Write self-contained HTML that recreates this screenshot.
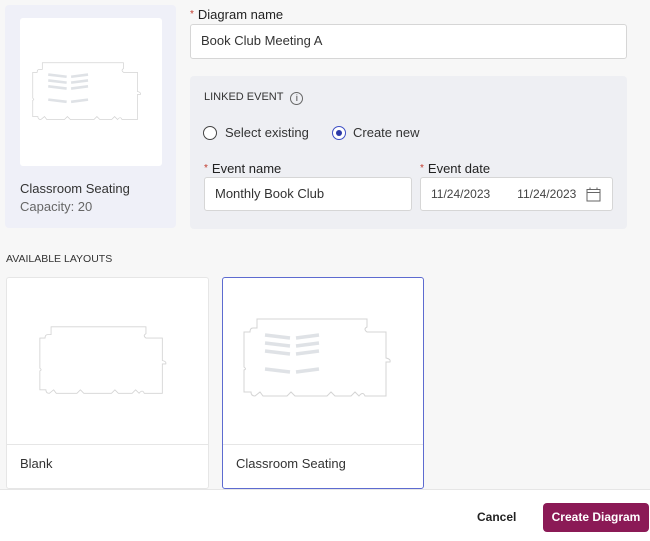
<!DOCTYPE html>
<html><head><meta charset="utf-8"><style>
*{box-sizing:border-box;margin:0;padding:0}
body{width:650px;height:541px;background:#f7f7f7;font-family:"Liberation Sans",sans-serif;color:#222;position:relative;overflow:hidden;font-size:13px}
.a{position:absolute}
.inp{position:absolute;background:#fff;border:1px solid #d6d6d6;border-radius:3px;padding-left:10px;line-height:32px;font-size:13px;color:#333}
.lab{position:absolute;font-size:13px;color:#222}
.lab b{color:#c0392b;font-weight:normal;font-size:10px;margin-right:4px;position:relative;top:-2px}
.card{position:absolute;background:#fff;border-radius:3px;border:1px solid #e6e6e6}
</style></head><body>
<svg width="0" height="0" style="position:absolute"><defs>
<g id="plan" fill="none" stroke="#d4d4d4" stroke-width="1">
<path d="M14,1 H124 V9 q-4,2 0,5 H134 V14 H143 V40 q5,1 4,4 H143 V78 H122 q-2,-5 -6,0 L112,74 L108,78 H92 L88,74 L84,78 H52 L48,74 L44,78 H20 L17,74 L12,78 q-4,0 -4,-4 H1 V52 q3,-1 0,-3 V14 H7 q0,-4 3,-4 H14 Z"/>
</g>
<g id="seats" stroke="#dfe2e6" stroke-width="3.5">
<line x1="22" y1="17" x2="47" y2="20"/><line x1="53" y1="20" x2="76" y2="17"/>
<line x1="22" y1="25" x2="47" y2="28"/><line x1="53" y1="28" x2="76" y2="25"/>
<line x1="22" y1="33" x2="47" y2="36"/><line x1="53" y1="36" x2="76" y2="33"/>
<line x1="22" y1="51" x2="47" y2="54"/><line x1="53" y1="54" x2="76" y2="51"/>
</g>
</defs></svg>

<div class="a" style="left:5px;top:5px;width:171px;height:223px;background:#eff0f8;border-radius:4px"></div>
<div class="a" style="left:20px;top:18px;width:142px;height:148px;background:#fff;border-radius:3px"></div>
<svg class="a" style="left:32px;top:62px" width="118" height="59" viewBox="0 0 160 80"><use href="#plan"/><use href="#seats"/></svg>
<div class="a" style="left:20px;top:181px;font-size:13px;color:#333">Classroom Seating</div>
<div class="a" style="left:20px;top:199px;font-size:13px;color:#666">Capacity: 20</div>

<div class="lab" style="left:190px;top:7px"><b>*</b>Diagram name</div>
<div class="inp" style="left:190px;top:24px;width:437px;height:35px">Book Club Meeting A</div>

<div class="a" style="left:190px;top:76px;width:437px;height:153px;background:#eeeff3;border-radius:4px"></div>
<div class="a" style="left:204px;top:91px;font-size:11px;color:#333">LINKED EVENT <span style="display:inline-block;width:13px;height:13px;border:1px solid #666;border-radius:50%;font-size:9px;text-align:center;line-height:11px;margin-left:4px;vertical-align:-1px">i</span></div>
<div class="a" style="left:203px;top:126px;width:14px;height:14px;border:1.5px solid #444;border-radius:50%;background:#fff"></div>
<div class="a" style="left:225px;top:125px;color:#333">Select existing</div>
<div class="a" style="left:332px;top:126px;width:14px;height:14px;border:1.5px solid #3d4ec4;border-radius:50%;background:#fff"><div style="width:6px;height:6px;margin:2.5px;background:#2c3aa8;border-radius:50%"></div></div>
<div class="a" style="left:353px;top:125px;color:#333">Create new</div>

<div class="lab" style="left:204px;top:161px"><b>*</b>Event name</div>
<div class="inp" style="left:204px;top:177px;width:208px;height:34px">Monthly Book Club</div>
<div class="lab" style="left:420px;top:161px"><b>*</b>Event date</div>
<div class="inp" style="left:420px;top:177px;width:193px;height:34px;color:#444;font-size:12px">11/24/2023<span style="margin-left:27px">11/24/2023</span>
<svg class="a" style="left:165px;top:9px" width="15" height="15" viewBox="0 0 15 15" fill="none" stroke="#666"><rect x="1" y="2.5" width="13" height="11.5"/><line x1="1" y1="5.5" x2="14" y2="5.5"/><line x1="4" y1="0.5" x2="4" y2="3"/><line x1="11" y1="0.5" x2="11" y2="3"/></svg></div>

<div class="a" style="left:6px;top:253px;font-size:10.5px;color:#333">AVAILABLE LAYOUTS</div>

<div class="card" style="left:6px;top:277px;width:203px;height:212px">
<svg class="a" style="left:32px;top:48px" width="138" height="69" viewBox="0 0 160 80"><use href="#plan"/></svg>
<div class="a" style="left:0;right:0;top:166px;border-top:1px solid #e6e6e6"></div>
<div class="a" style="left:13px;top:178px;color:#333">Blank</div></div>

<div class="card" style="left:222px;top:277px;width:202px;height:212px;border-color:#5d6bd0">
<svg class="a" style="left:20px;top:40px" width="160" height="80" viewBox="0 0 160 80"><use href="#plan"/><use href="#seats"/></svg>
<div class="a" style="left:0;right:0;top:166px;border-top:1px solid #e6e6e6"></div>
<div class="a" style="left:13px;top:178px;color:#333">Classroom Seating</div></div>

<div class="a" style="left:0;top:489px;width:650px;height:52px;background:#fff;border-top:1px solid #e6e6e6"></div>
<div class="a" style="left:477px;top:510px;font-weight:bold;font-size:12px;color:#222">Cancel</div>
<div class="a" style="left:543px;top:503px;width:106px;height:29px;background:#8b1a56;border-radius:4px;color:#fff;font-weight:bold;font-size:12px;text-align:center;line-height:29px">Create Diagram</div>
</body></html>
